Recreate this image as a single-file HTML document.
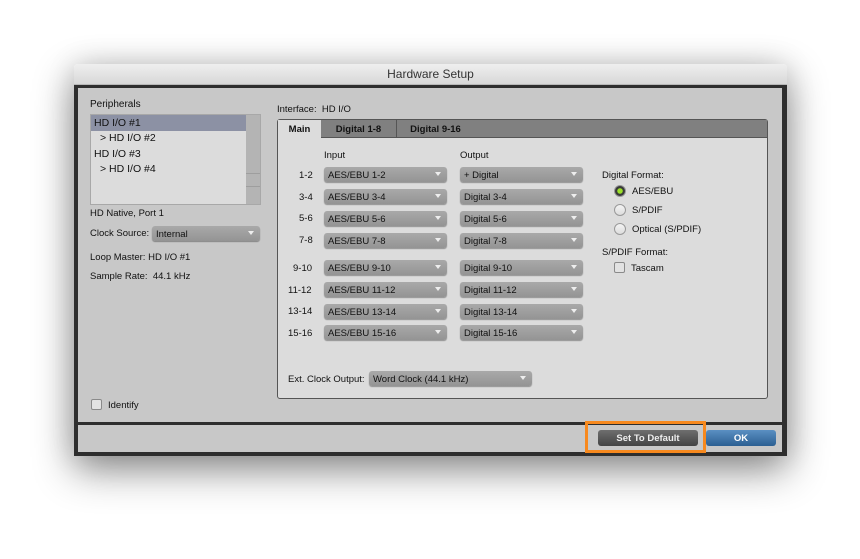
<!DOCTYPE html>
<html><head><meta charset="utf-8"><style>
*{margin:0;padding:0;box-sizing:border-box}
body{width:860px;height:559px;background:#fff;position:relative;overflow:hidden;font-family:"Liberation Sans",Arial,sans-serif;font-size:9.5px;color:#111}
.a{position:absolute}
.win{left:74px;top:64px;width:713px;height:392px;box-shadow:0 14px 40px rgba(0,0,0,.45),0 0 30px rgba(0,0,0,.12);border-radius:4px 4px 0 0}
.title{left:74px;top:64px;width:713px;height:21px;background:linear-gradient(#efefef,#d8d8d8);border-radius:4px 4px 0 0;text-align:center;font-size:12px;line-height:21px;color:#333;border-bottom:1px solid #b8b8b8}
.frame{left:74px;top:85px;width:713px;height:371px;background:#2e2e2e}
.inner{left:78px;top:88px;width:704px;height:334px;background:#c8c8c8}
.bot{left:78px;top:425px;width:704px;height:27px;background:#c8c8c8}
.dd{position:absolute;height:15px;border-radius:3px;background:linear-gradient(#a9a9a9,#949494);box-shadow:0 1px 1px rgba(0,0,0,.35);font-size:9.5px;line-height:17px;padding-left:4px;color:#111}
.dd:after{content:"";position:absolute;right:6px;top:5px;border-left:3px solid transparent;border-right:3px solid transparent;border-top:4px solid #eee}
.lbl{position:absolute;font-size:9.5px}
.rad{position:absolute;width:12px;height:12px;border-radius:50%;border:1px solid #999;background:linear-gradient(#f4f4f4,#dcdcdc)}
.chk{position:absolute;width:11px;height:11px;border-radius:2px;border:1px solid #8a8a8a;background:#e2e2e2}
</style></head><body>
<div class="a win"></div>
<div class="a frame"></div>
<div class="a title">Hardware Setup</div>
<div class="a inner"></div>
<div class="a bot"></div>

<div class="lbl" style="left:90px;top:99px;font-size:10px">Peripherals</div>
<div class="a" style="left:90px;top:114px;width:171px;height:91px;background:#dcdcdc;border:1px solid #a8a8a8"></div>
<div class="a" style="left:246px;top:115px;width:14px;height:89px;background:#b4b4b4"></div>
<div class="a" style="left:246px;top:173px;width:14px;height:14px;border-top:1px solid #9e9e9e;border-bottom:1px solid #9e9e9e"></div>
<div class="a" style="left:91px;top:115px;width:155px;height:16px;background:#8c91a4"></div>
<div class="lbl" style="left:94px;top:117px;font-size:10.5px">HD I/O #1</div>
<div class="lbl" style="left:100px;top:132px;font-size:10.5px">&gt; HD I/O #2</div>
<div class="lbl" style="left:94px;top:148px;font-size:10.5px">HD I/O #3</div>
<div class="lbl" style="left:100px;top:163px;font-size:10.5px">&gt; HD I/O #4</div>
<div class="lbl" style="left:90px;top:208px">HD Native, Port 1</div>
<div class="lbl" style="left:90px;top:228px">Clock Source:</div>
<div class="dd" style="left:152px;top:226px;width:108px">Internal</div>
<div class="lbl" style="left:90px;top:252px">Loop Master: HD I/O #1</div>
<div class="lbl" style="left:90px;top:271px">Sample Rate:&nbsp; 44.1 kHz</div>
<div class="chk" style="left:91px;top:399px"></div>
<div class="lbl" style="left:108px;top:400px">Identify</div>

<div class="lbl" style="left:277px;top:104px">Interface:&nbsp; HD I/O</div>
<div class="a" style="left:277px;top:119px;width:491px;height:280px;background:#dcdcdc;border:1px solid #555;border-radius:3px"></div>
<div class="a" style="left:278px;top:120px;width:489px;height:18px;background:#808080;border-bottom:1px solid #555"></div>
<div class="a" style="left:278px;top:120px;width:43px;height:18px;background:#dcdcdc;text-align:center;font-weight:bold;line-height:19px;font-size:9.5px">Main</div>
<div class="a" style="left:321px;top:120px;width:76px;height:18px;border-right:1px solid #555;text-align:center;font-weight:bold;line-height:19px;font-size:9.5px">Digital 1-8</div>
<div class="a" style="left:398px;top:120px;width:75px;height:18px;text-align:center;font-weight:bold;line-height:19px;font-size:9.5px">Digital 9-16</div>

<div class="lbl" style="left:324px;top:150px">Input</div>
<div class="lbl" style="left:460px;top:150px">Output</div>

<div class="lbl" style="left:299px;top:170px">1-2</div><div class="dd" style="left:324px;top:167px;width:123px">AES/EBU 1-2</div><div class="dd" style="left:460px;top:167px;width:123px">+ Digital</div>
<div class="lbl" style="left:299px;top:192px">3-4</div><div class="dd" style="left:324px;top:189px;width:123px">AES/EBU 3-4</div><div class="dd" style="left:460px;top:189px;width:123px">Digital 3-4</div>
<div class="lbl" style="left:299px;top:213px">5-6</div><div class="dd" style="left:324px;top:211px;width:123px">AES/EBU 5-6</div><div class="dd" style="left:460px;top:211px;width:123px">Digital 5-6</div>
<div class="lbl" style="left:299px;top:235px">7-8</div><div class="dd" style="left:324px;top:233px;width:123px">AES/EBU 7-8</div><div class="dd" style="left:460px;top:233px;width:123px">Digital 7-8</div>
<div class="lbl" style="left:293px;top:263px">9-10</div><div class="dd" style="left:324px;top:260px;width:123px">AES/EBU 9-10</div><div class="dd" style="left:460px;top:260px;width:123px">Digital 9-10</div>
<div class="lbl" style="left:288px;top:285px">11-12</div><div class="dd" style="left:324px;top:282px;width:123px">AES/EBU 11-12</div><div class="dd" style="left:460px;top:282px;width:123px">Digital 11-12</div>
<div class="lbl" style="left:288px;top:306px">13-14</div><div class="dd" style="left:324px;top:304px;width:123px">AES/EBU 13-14</div><div class="dd" style="left:460px;top:304px;width:123px">Digital 13-14</div>
<div class="lbl" style="left:288px;top:328px">15-16</div><div class="dd" style="left:324px;top:325px;width:123px">AES/EBU 15-16</div><div class="dd" style="left:460px;top:325px;width:123px">Digital 15-16</div>

<div class="lbl" style="left:602px;top:170px">Digital Format:</div>
<div class="rad" style="left:614px;top:185px;background:radial-gradient(circle,#9be02a 0 2.5px,#3a3a3a 3px)"></div>
<div class="lbl" style="left:632px;top:186px">AES/EBU</div>
<div class="rad" style="left:614px;top:204px"></div>
<div class="lbl" style="left:632px;top:205px">S/PDIF</div>
<div class="rad" style="left:614px;top:223px"></div>
<div class="lbl" style="left:632px;top:224px">Optical (S/PDIF)</div>
<div class="lbl" style="left:602px;top:247px">S/PDIF Format:</div>
<div class="chk" style="left:614px;top:262px"></div>
<div class="lbl" style="left:631px;top:263px">Tascam</div>

<div class="lbl" style="left:288px;top:374px">Ext. Clock Output:</div>
<div class="dd" style="left:369px;top:371px;width:163px">Word Clock (44.1 kHz)</div>

<div class="a" style="left:585px;top:421px;width:121px;height:32px;border:3px solid #f7891e"></div>
<div class="a" style="left:598px;top:430px;width:100px;height:16px;border-radius:3px;background:linear-gradient(#6e6e6e,#444);color:#eee;font-weight:bold;font-size:9.5px;text-align:center;line-height:17px">Set To Default</div>
<div class="a" style="left:706px;top:430px;width:70px;height:16px;border-radius:3px;background:linear-gradient(#5a8fc2,#2c5f92);color:#fff;font-weight:bold;font-size:9.5px;text-align:center;line-height:17px">OK</div>
</body></html>
